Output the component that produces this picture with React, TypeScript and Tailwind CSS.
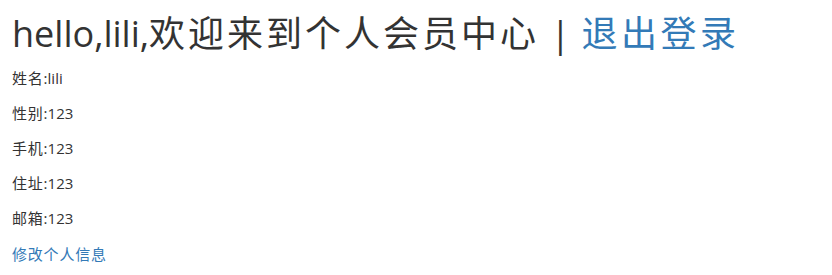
import React from 'react';

const font = { fontFamily: '"Open Sans", "Noto Sans CJK SC", sans-serif' };

export default function App() {
  const rows = [
    ['姓名', 'lili'],
    ['性别', '123'],
    ['手机', '123'],
    ['住址', '123'],
    ['邮箱', '123'],
  ];

  return (
    <div className="min-h-[275px] bg-white px-3 text-[#333]" style={font}>
      <h1 className="pt-[12px] text-[36px] leading-[44px] font-normal">
        hello,lili,<span className="tracking-[3px]">欢迎来到个人会员中心</span>
        <span className="mx-[2px]"> | </span>
        <a className="tracking-[3.5px] text-[#337ab7]" href="#">
          退出登录
        </a>
      </h1>
      <div className="mt-[12px] text-[15px]">
        {rows.map(([k, v]) => (
          <p key={k} className="h-[35px] leading-[20px]">
            <span className="tracking-[0.8px]">{k}</span>:{v}
          </p>
        ))}
        <a className="leading-[20px] tracking-[0.8px] text-[#337ab7]" href="#">
          修改个人信息
        </a>
      </div>
    </div>
  );
}
